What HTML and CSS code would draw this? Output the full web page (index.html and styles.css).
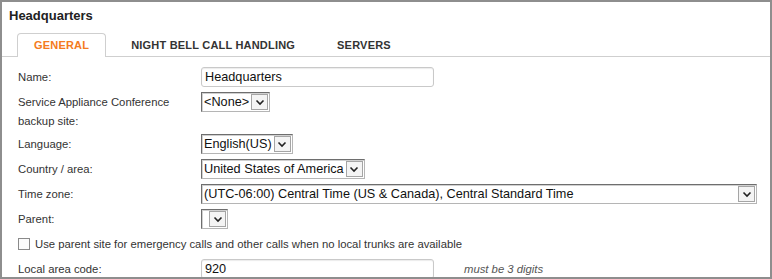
FILE: index.html
```html
<!DOCTYPE html>
<html lang="en">
<head>
    <meta charset="UTF-8">
    <title>Headquarters</title>
    <link rel="stylesheet" href="styles.css">
</head>
<body>
    <div class="panel">
        <div class="panel-title">Headquarters</div>
        <div class="tabs">
            <div class="tab active">GENERAL</div>
            <div class="tab">NIGHT BELL CALL HANDLING</div>
            <div class="tab">SERVERS</div>
        </div>
        <div class="form">
            <label class="field-label">Name:</label>
            <div class="field"><input class="text-input" type="text" value="Headquarters"></div>

            <label class="field-label multi">Service Appliance Conference backup site:</label>
            <div class="field"><div class="select"><span class="select-value">&lt;None&gt;</span><span class="select-arrow"><svg viewBox="0 0 14 14" width="14" height="14"><path d="M3.5 5.5 L7 9 L10.5 5.5" fill="none" stroke="#222" stroke-width="1.6"/></svg></span></div></div>

            <label class="field-label">Language:</label>
            <div class="field"><div class="select"><span class="select-value">English(US)</span><span class="select-arrow"><svg viewBox="0 0 14 14" width="14" height="14"><path d="M3.5 5.5 L7 9 L10.5 5.5" fill="none" stroke="#222" stroke-width="1.6"/></svg></span></div></div>

            <label class="field-label">Country / area:</label>
            <div class="field"><div class="select"><span class="select-value">United States of America</span><span class="select-arrow"><svg viewBox="0 0 14 14" width="14" height="14"><path d="M3.5 5.5 L7 9 L10.5 5.5" fill="none" stroke="#222" stroke-width="1.6"/></svg></span></div></div>

            <label class="field-label">Time zone:</label>
            <div class="field"><div class="select select-wide"><span class="select-value">(UTC-06:00) Central Time (US &amp; Canada), Central Standard Time</span><span class="select-arrow"><svg viewBox="0 0 14 14" width="14" height="14"><path d="M3.5 5.5 L7 9 L10.5 5.5" fill="none" stroke="#222" stroke-width="1.6"/></svg></span></div></div>

            <label class="field-label">Parent:</label>
            <div class="field"><div class="select"><span class="select-value empty"></span><span class="select-arrow"><svg viewBox="0 0 14 14" width="14" height="14"><path d="M3.5 5.5 L7 9 L10.5 5.5" fill="none" stroke="#222" stroke-width="1.6"/></svg></span></div></div>

            <div class="check-row">
                <span class="checkbox"></span>
                <span>Use parent site for emergency calls and other calls when no local trunks are available</span>
            </div>

            <label class="field-label">Local area code:</label>
            <div class="field"><input class="text-input" type="text" value="920"><span class="hint">must be 3 digits</span></div>
        </div>
    </div>
</body>
</html>
```

FILE: styles.css
```css
body {
    margin: 0;
    background: #fff;
    font-family: 'Liberation Sans', Arial, sans-serif;
    color: #333;
}

.panel {
    width: 772px;
    height: 279px;
    box-sizing: border-box;
    border: 2px solid #8e8e8e;
    background: #fff;
    overflow: hidden;
}

.panel-title {
    padding: 5px 7px 0;
    font-size: 13px;
    line-height: 17px;
    font-weight: bold;
    color: #222;
}

.tabs {
    display: flex;
    gap: 8px;
    margin-top: 9px;
    padding-left: 15px;
    border-bottom: 1px solid #cfcfcf;
}

.tab {
    height: 24px;
    box-sizing: border-box;
    padding: 0 16px;
    line-height: 23px;
    font-size: 11px;
    font-weight: bold;
    letter-spacing: 0.2px;
    color: #333;
    border: 1px solid transparent;
    border-bottom: none;
    margin-bottom: -1px;
}

.tab.active {
    color: #f47b20;
    background: #fff;
    border-color: #cfcfcf;
    border-radius: 4px 4px 0 0;
}

.form {
    display: grid;
    grid-template-columns: 183px 1fr;
    row-gap: 5px;
    padding: 10px 13px 0 16px;
}

.field-label {
    font-size: 11.3px;
    line-height: 20px;
    color: #333;
}

.field-label.multi {
    line-height: 18.5px;
    padding-top: 1px;
    margin-bottom: -1px;
}

.field {
    display: flex;
    align-items: center;
    height: 20px;
}

.text-input {
    width: 233px;
    height: 20px;
    box-sizing: border-box;
    margin: 0;
    padding: 0 3px;
    border: 1px solid #c9c9c9;
    border-radius: 3px;
    box-shadow: inset 0 1px 1px rgba(0, 0, 0, 0.08);
    font-family: 'Liberation Sans', Arial, sans-serif;
    font-size: 12.7px;
    color: #111;
    outline: none;
}

.select {
    display: inline-flex;
    align-items: center;
    height: 20px;
    box-sizing: border-box;
    border: 1px solid;
    border-color: #6e6e6e #b5b5b5 #b5b5b5 #6e6e6e;
    box-shadow: inset 1px 1px 0 #d0d0d0;
    padding: 0 1px 0 2px;
    font-size: 12.7px;
    color: #111;
    white-space: nowrap;
}

.select-wide {
    width: 556px;
}

.select-wide .select-value {
    flex: 1;
}

.select-value.empty {
    width: 3px;
}

.select-arrow {
    display: flex;
    align-items: center;
    justify-content: center;
    width: 17px;
    height: 16px;
    box-sizing: border-box;
    margin-left: 2px;
    border: 1px solid #a5a5a5;
    background: #f4f4f4;
}

.check-row {
    grid-column: 1 / 3;
    display: flex;
    align-items: center;
    gap: 5px;
    height: 20px;
    font-size: 11.3px;
    color: #333;
}

.checkbox {
    width: 12px;
    height: 12px;
    box-sizing: border-box;
    border: 1px solid #8a8a8a;
    background: #fbfbfb;
}

.hint {
    margin-left: 30px;
    font-size: 11.3px;
    font-style: italic;
    color: #555;
}
```
